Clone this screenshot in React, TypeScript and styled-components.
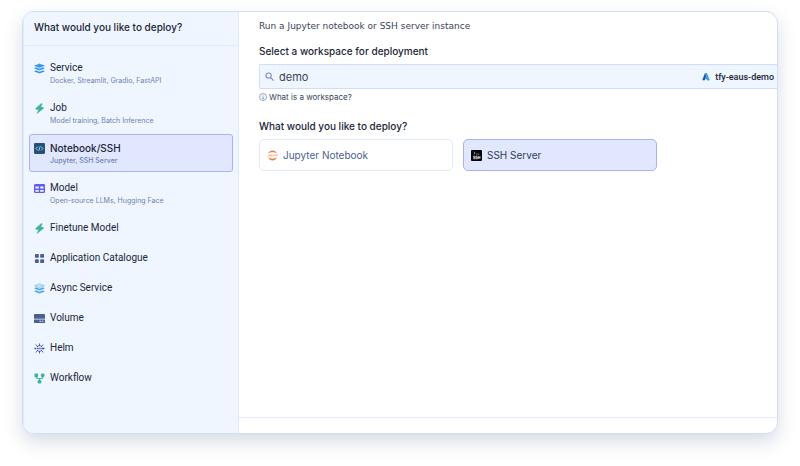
import type { ReactNode } from "react";
import { useState } from "react";
import styled, { createGlobalStyle, css } from "styled-components";

const color = {
  ink: "#1b2537",
  muted: "#6c82b3",
  slate: "#4b5f92",
  line: "#dfeafa",
  frame: "#cfdff5",
  wash: "#eff6ff",
  active: "#e0e7ff",
  activeLine: "#a9b2f8",
};

const GlobalStyle = createGlobalStyle`
  *, *::before, *::after { box-sizing: border-box; }
  body {
    margin: 0;
    background: #fff;
    color: ${color.ink};
    font-family: Roboto, "Liberation Sans", sans-serif;
    font-size: 10px;
    line-height: 14px;
  }
  button, input { font: inherit; color: inherit; }
`;

const Page = styled.div`
  display: flex;
  min-height: 100vh;
  padding: 11px 22px 32px;
`;

const Window = styled.div`
  display: flex;
  flex: 1;
  min-width: 0;
  overflow: hidden;
  border: 1px solid ${color.frame};
  border-radius: 12px;
  background: #fff;
  box-shadow: 0 8px 18px rgba(71, 98, 140, 0.22);
`;

const Sidebar = styled.aside`
  flex: 0 0 216px;
  border-left: 1px solid ${color.line};
  border-right: 1px solid ${color.line};
  background: ${color.wash};
`;

const SidebarTitle = styled.h2`
  margin: 0;
  padding: 8px 10px 10px;
  border-bottom: 1px solid ${color.line};
  font-family: Inter, sans-serif;
  font-size: 10px;
  font-weight: 500;
  line-height: 15px;
`;

const Nav = styled.nav`
  display: flex;
  flex-direction: column;
  gap: 2px;
  padding: 8px 5px;
`;

const NavItem = styled.button<{ $active: boolean; $tall: boolean }>`
  display: grid;
  grid-template-columns: 11px 1fr;
  column-gap: 5px;
  align-items: center;
  align-content: center;
  min-height: ${(p) => (p.$tall ? 38 : 28)}px;
  padding: ${(p) => (p.$tall ? 2 : 0)}px 4px 0;
  border: 1px solid transparent;
  border-radius: 3px;
  background: transparent;
  text-align: left;
  cursor: pointer;
  ${(p) =>
    p.$active &&
    css`
      border-color: ${color.activeLine};
      background: ${color.active};
      font-weight: 500;
    `}
`;

const ItemLabel = styled.span<{ $active: boolean }>`
  font-family: ${(p) => (p.$active ? "Inter" : "Roboto")}, sans-serif;
  line-height: 14px;
`;

const ItemHint = styled.span`
  grid-column: 2;
  color: ${color.muted};
  font-family: Inter, sans-serif;
  font-size: 7px;
  line-height: 12px;
`;

const Glyph = styled.svg<{ $size?: number }>`
  display: block;
  flex: none;
  width: ${(p) => p.$size ?? 11}px;
  height: ${(p) => p.$size ?? 11}px;
`;

const Main = styled.main`
  display: flex;
  flex: 1;
  flex-direction: column;
  min-width: 0;
`;

const Content = styled.div`
  flex: 1;
  padding: 7px 0 12px 20px;
`;

const Description = styled.p`
  margin: 0 0 10px;
  font-family: "DejaVu Sans", sans-serif;
  font-size: 9px;
  line-height: 14px;
  color: #37435a;
`;

const Heading = styled.h3`
  display: block;
  margin: 0 0 5px;
  font-family: Inter, sans-serif;
  font-size: 10px;
  font-weight: 500;
  line-height: 16px;
`;

const Field = styled.div`
  display: flex;
  align-items: center;
  gap: 5px;
  height: 25px;
  padding: 0 3px 0 5px;
  border: 1px solid #cddff9;
  border-right: 0;
  border-radius: 2px 0 0 2px;
  background: ${color.wash};
`;

const WorkspaceInput = styled.input`
  flex: 1;
  min-width: 0;
  padding: 0;
  border: 0;
  outline: 0;
  background: transparent;
  font-family: Inter, sans-serif;
  font-size: 11px;
  color: #3a4355;
`;

const Cluster = styled.span`
  display: flex;
  align-items: center;
  gap: 5px;
  font-family: Roboto, sans-serif;
  font-size: 9px;
  font-weight: 500;
`;

const HelpLink = styled.a`
  display: flex;
  align-items: center;
  gap: 2px;
  width: fit-content;
  margin: 2px 0 15px;
  font-family: Inter, sans-serif;
  font-size: 8px;
  line-height: 12px;
  color: #37435a;
  text-decoration: none;
`;

const Choices = styled.div`
  display: grid;
  grid-template-columns: repeat(2, minmax(0, 194px));
  gap: 10px;
`;

const Choice = styled.button<{ $active: boolean }>`
  display: flex;
  align-items: center;
  gap: 5px;
  height: 32px;
  padding: 0 7px;
  border: 1px solid ${(p) => (p.$active ? color.activeLine : color.line)};
  border-radius: 5px;
  background: ${(p) => (p.$active ? color.active : "#fff")};
  color: ${(p) => (p.$active ? "#343d50" : color.slate)};
  font-family: Inter, sans-serif;
  text-align: left;
  cursor: pointer;
`;

const Footer = styled.footer`
  height: 16px;
  border-top: 1px solid ${color.line};
`;

const Layers = ({ fade = false }: { fade?: boolean }) => (
  <Glyph viewBox="0 0 24 24" aria-hidden="true">
    <path
      d="M12 2 22.500 6 12 10 1.500 6Z"
      fill={fade ? "#c7e4fb" : "#3b97e3"}
      stroke={fade ? "#6cb6ee" : "#3b97e3"}
      strokeWidth="1.4"
      strokeLinejoin="round"
    />
    <path
      d="m4 9.500 8 3.300 8-3.300 3.500 2.300L12 16.500.5 11.800Zm0 6.500 8 3.300 8-3.300 3.500 2.300L12 23 .5 18.300Z"
      fill={fade ? "#4ba5ea" : "#3b97e3"}
    />
  </Glyph>
);

const Bolt = () => (
  <Glyph viewBox="0 0 24 24" aria-hidden="true">
    <path
      d="M16 1 4 11.700c-.8.8-.3 2.300.8 2.300H10L7 23l13.500-11.200c.8-.7.3-2.300-.8-2.300H15L18 1.800Z"
      fill="#3fb39c"
      stroke="#3fb39c"
      strokeLinejoin="round"
    />
  </Glyph>
);

const CodeSquare = () => (
  <Glyph viewBox="0 0 24 24" aria-hidden="true">
    <rect x="0" y="0" width="24" height="24" rx="2.5" fill="#23517d" />
    <path
      d="m8 8-3.500 4L8 16m8-8 3.500 4-3.500 4M13.500 7l-3 10"
      fill="none"
      stroke="#dbe7f5"
      strokeWidth="1.7"
    />
  </Glyph>
);

const TableGrid = () => (
  <Glyph viewBox="0 0 24 24" aria-hidden="true">
    <rect x="0" y="2" width="24" height="20" rx="3" fill="#5d5fef" />
    <path d="M3 7.500h7.500v4.500H3Zm10.500 0H21v4.500h-7.500ZM3 15h7.500v4H3Zm10.500 0H21v4h-7.500Z" fill="#eff2ff" />
  </Glyph>
);

const Apps = () => (
  <Glyph viewBox="0 0 24 24" aria-hidden="true" fill="#4b5f92">
    <rect x="2" y="2" width="8.500" height="8.500" rx="2" />
    <rect x="13.500" y="2" width="8.500" height="8.500" rx="2" />
    <rect x="2" y="13.500" width="8.500" height="8.500" rx="2" />
    <rect x="13.500" y="13.500" width="8.500" height="8.500" rx="2" />
  </Glyph>
);

const Drive = () => (
  <Glyph viewBox="0 0 24 24" aria-hidden="true">
    <path d="M2 2h20a2 2 0 0 1 2 2v8.500H0V4a2 2 0 0 1 2-2Z" fill="#4b5f92" />
    <path d="M0 14h24v6a2 2 0 0 1-2 2H2a2 2 0 0 1-2-2Z" fill="#4b5f92" />
    <path d="M12 17h4v2h-4Zm5.500 0h3v2h-3Z" fill="#e4ecfa" />
  </Glyph>
);

const HelmWheel = () => (
  <Glyph viewBox="0 0 24 24" aria-hidden="true" fill="none" stroke="#4653a5">
    <path d="M6.500 8.500a7 7 0 0 1 11 0M6.500 15.500a7 7 0 0 0 11 0" strokeWidth="2" />
    <path
      d="M12 5.500V2M7 7 4.500 4M17 7l2.500-3M12 18.500V22M7 17l-2.500 3M17 17l2.500 3"
      strokeWidth="2"
      strokeLinecap="round"
    />
    <path d="M1 12h4m1.500 0H10m1.500 0h3m1.500 0h7" strokeWidth="3" />
  </Glyph>
);

const Branches = () => (
  <Glyph viewBox="0 0 24 24" aria-hidden="true">
    <path d="M5 5v4q0 3 3 3h8q3 0 3-3V5m-7 7v7" fill="none" stroke="#3fb39c" strokeWidth="2.400" />
    <rect x="1" y="1" width="8" height="8" rx="2" fill="#3fb39c" />
    <rect x="15" y="1" width="8" height="8" rx="3" fill="#3fb39c" />
    <rect x="8" y="15" width="8" height="8" rx="3" fill="#3fb39c" />
  </Glyph>
);

const SearchIcon = () => (
  <Glyph viewBox="0 0 24 24" $size={9} aria-hidden="true" fill="none" stroke="#7d92c2" strokeWidth="3">
    <circle cx="9.500" cy="9.500" r="7" />
    <path d="m15 15 7 7" strokeLinecap="round" />
  </Glyph>
);

const InfoIcon = () => (
  <Glyph viewBox="0 0 24 24" $size={8} aria-hidden="true" fill="none" stroke="#5d79b8" strokeWidth="2">
    <circle cx="12" cy="12" r="10.500" />
    <path d="M10 11h2.500v6M9.500 17h5.500M12 6v2.500" />
  </Glyph>
);

const AzureIcon = () => (
  <Glyph viewBox="0 0 24 24" $size={8} aria-hidden="true">
    <path d="M8.500 1.500h7L8.500 22H2.500q-2 0-1.300-2Z" fill="#1c5aa6" />
    <path d="M9 14h9l3 8h-4Z" fill="#1976c9" />
    <path d="M9.500 1.500h6L23 20q.5 2-1.500 2h-6Z" fill="#3aa4ea" />
  </Glyph>
);

const JupyterIcon = () => (
  <Glyph viewBox="0 0 24 24" aria-hidden="true" fill="#ef7f3a">
    <path d="M2.500 8C4 3.500 7.500 1 12 1s8 2.500 9.500 7C19 6 16 5 12 5s-7 1-9.500 3Z" />
    <path d="M2.500 16c1.500 4.500 5 7 9.500 7s8-2.500 9.500-7c-2.500 2-5.500 3-9.500 3s-7-1-9.500-3Z" />
    <path
      d="M2 10v4H1m3-4v3h2v-3m2 5v-5h2v3H8m4-3 1 3 1-3m2-1v4h1m2-1h2v-2h-2v3h2m2 0v-3h1"
      fill="none"
      stroke="#ef9a66"
      strokeWidth="1"
    />
  </Glyph>
);

const SshIcon = () => (
  <Glyph viewBox="0 0 24 24" aria-hidden="true">
    <rect x="0" y="0" width="24" height="24" rx="2" fill="#05060a" />
    <path d="m6 4 3 2.500L6 9m5 0h3m1 0h3" fill="none" stroke="#c6c8ce" strokeWidth="1.500" />
    <path
      d="M9 13.500H5.500v2.500H9v3H5m9-5.500h-3.500v2.500H14v3h-4m6-6v6.500m3.500-6.500v6.500M16 16.300h3.500"
      fill="none"
      stroke="#fff"
      strokeWidth="1.500"
    />
  </Glyph>
);

type Item = { label: string; hint?: string; icon: ReactNode };

const items: Item[] = [
  { label: "Service", hint: "Docker, Streamlit, Gradio, FastAPI", icon: <Layers /> },
  { label: "Job", hint: "Model training, Batch Inference", icon: <Bolt /> },
  { label: "Notebook/SSH", hint: "Jupyter, SSH Server", icon: <CodeSquare /> },
  { label: "Model", hint: "Open-source LLMs, Hugging Face", icon: <TableGrid /> },
  { label: "Finetune Model", icon: <Bolt /> },
  { label: "Application Catalogue", icon: <Apps /> },
  { label: "Async Service", icon: <Layers fade /> },
  { label: "Volume", icon: <Drive /> },
  { label: "Helm", icon: <HelmWheel /> },
  { label: "Workflow", icon: <Branches /> },
];

const choices: Item[] = [
  { label: "Jupyter Notebook", icon: <JupyterIcon /> },
  { label: "SSH Server", icon: <SshIcon /> },
];

export default function App() {
  const [selected, setSelected] = useState("Notebook/SSH");
  const [choice, setChoice] = useState("SSH Server");

  return (
    <>
      <GlobalStyle />
      <Page>
        <Window>
          <Sidebar>
            <SidebarTitle>What would you like to deploy?</SidebarTitle>
            <Nav>
              {items.map(({ label, hint, icon }) => (
                <NavItem
                  key={label}
                  type="button"
                  $active={label === selected}
                  $tall={Boolean(hint)}
                  aria-pressed={label === selected}
                  onClick={() => setSelected(label)}
                >
                  {icon}
                  <ItemLabel $active={label === selected}>{label}</ItemLabel>
                  {hint && <ItemHint>{hint}</ItemHint>}
                </NavItem>
              ))}
            </Nav>
          </Sidebar>
          <Main>
            <Content>
              <Description>Run a Jupyter notebook or SSH server instance</Description>
              <Heading as="label" htmlFor="workspace">
                Select a workspace for deployment
              </Heading>
              <Field>
                <SearchIcon />
                <WorkspaceInput id="workspace" defaultValue="demo" />
                <Cluster>
                  <AzureIcon />
                  tfy-eaus-demo
                </Cluster>
              </Field>
              <HelpLink href="#workspace">
                <InfoIcon />
                What is a workspace?
              </HelpLink>
              <Heading>What would you like to deploy?</Heading>
              <Choices>
                {choices.map(({ label, icon }) => (
                  <Choice
                    key={label}
                    type="button"
                    $active={label === choice}
                    aria-pressed={label === choice}
                    onClick={() => setChoice(label)}
                  >
                    {icon}
                    {label}
                  </Choice>
                ))}
              </Choices>
            </Content>
            <Footer />
          </Main>
        </Window>
      </Page>
    </>
  );
}
